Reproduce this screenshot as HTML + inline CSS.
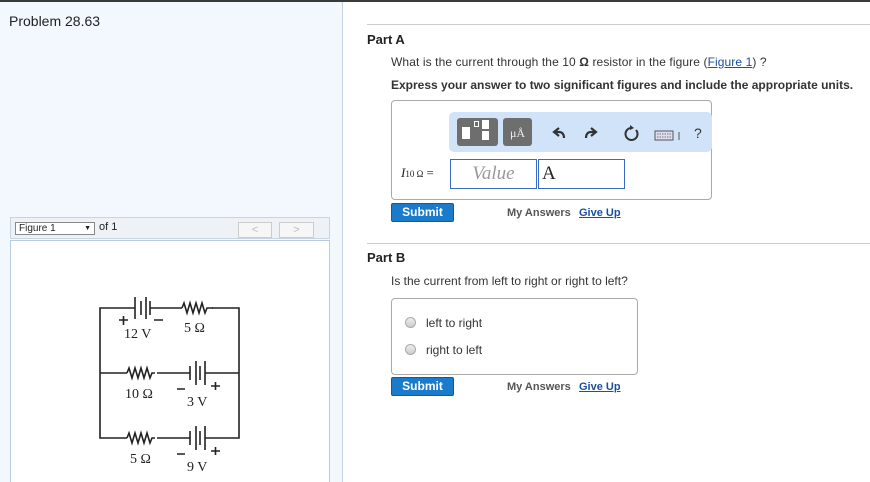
<!DOCTYPE html>
<html><head><meta charset="utf-8"><style>
*{margin:0;padding:0;box-sizing:border-box}
html,body{width:870px;height:482px;overflow:hidden}
body{background:#fff;font-family:"Liberation Sans",Arial,sans-serif;font-size:12px;color:#333;position:relative}
.a{position:absolute;white-space:nowrap}
.btn{position:absolute;background:#1a7bcc;border:1px solid #0e5c9e;border-radius:2px;color:#fff;font-weight:bold;font-size:12px;text-align:center;line-height:17px}
.lnk{font-weight:bold;font-size:11px}
.gu{color:#1a4f9c;text-decoration:underline}
.radio{position:absolute;width:11px;height:11px;border-radius:50%;border:1px solid #aaa;background:linear-gradient(#eee,#ccc)}
</style></head><body>
<div class="a" style="left:0;top:0;width:870px;height:2px;background:#3a3a3a"></div>
<div class="a" style="left:0;top:2px;width:343px;height:480px;background:#f3f8fe;border-right:1px solid #c5d3e0"></div>
<div class="a" style="left:9px;top:13px;font-size:14px;color:#222">Problem 28.63</div>

<div class="a" style="left:10px;top:217px;width:320px;height:22px;background:#eef2f7;border:1px solid #c8d4e0"></div>
<div class="a" style="left:15px;top:222px;width:80px;height:13px;background:#fff;border:1px solid #888;font-size:10px;line-height:11px;padding-left:3px;color:#222">Figure 1<span style="position:absolute;right:3px;font-size:7px">▼</span></div>
<div class="a" style="left:99px;top:221px;font-size:11px;color:#222">of 1</div>
<div class="a" style="left:238px;top:222px;width:34px;height:16px;border:1px solid #ccc;background:#f6f6f6;color:#bbb;text-align:center;font-size:11px;line-height:14px">&lt;</div>
<div class="a" style="left:279px;top:222px;width:35px;height:16px;border:1px solid #ccc;background:#f6f6f6;color:#bbb;text-align:center;font-size:11px;line-height:14px">&gt;</div>
<div class="a" style="left:10px;top:240px;width:320px;height:250px;background:#fff;border:1px solid #b9cde0"></div>
<svg class="a" style="left:0;top:0" width="343" height="482" viewBox="0 0 343 482">
<g stroke="#222" stroke-width="1.6" fill="none">
<path d="M135 308H100V438H127M150 308H182M212 308H239V438H205M127 373H100M205 373H239"/>
<path d="M157 373H190M157 438H190" />
<path d="M182 308l2-5 3 10 3-10 3 10 3-10 3 10 3-10 3 10 2-5h6"/>
<path d="M127 373l2-5 3 10 3-10 3 10 3-10 3 10 3-10 3 10 2-5h3"/>
<path d="M127 438l2-5 3 10 3-10 3 10 3-10 3 10 3-10 3 10 2-5h3"/>
</g>
<g stroke="#222" fill="none">
<path stroke-width="1.6" d="M135 297v22M141 301v14M146 297v22M150 301v14"/>
<path stroke-width="1.6" d="M190 366v14M196 361v24M200 366v14M205 361v24"/>
<path stroke-width="1.6" d="M190 431v14M196 426v24M200 431v14M205 426v24"/>
<path stroke-width="1.6" d="M119 320h9M123.5 316v9M154 320h9M177 389h8M211 386h9M215.5 382v8M177 454h8M211 451h9M215.5 447v8"/>
</g>
<g font-family="Liberation Serif,serif" font-size="14" fill="#222">
<text x="124" y="338">12 V</text><text x="184" y="332">5 Ω</text>
<text x="125" y="398">10 Ω</text><text x="187" y="406">3 V</text>
<text x="130" y="463">5 Ω</text><text x="187" y="471">9 V</text>
</g>
</svg>

<div class="a" style="left:367px;top:24px;width:503px;height:1px;background:#ccc"></div>
<div class="a" style="left:367px;top:32px;font-size:13px;font-weight:bold;color:#222">Part A</div>
<div class="a" style="left:391px;top:55px;font-size:12px;letter-spacing:0.1px">What is the current through the 10 <b>Ω</b> resistor in the figure (<span class="gu">Figure 1</span>) ?</div>
<div class="a" style="left:391px;top:78px;font-size:12px;font-weight:bold">Express your answer to two significant figures and include the appropriate units.</div>
<div class="a" style="left:391px;top:100px;width:321px;height:100px;border:1px solid #aaa;border-radius:4px"></div>
<div class="a" style="left:449px;top:112px;width:263px;height:40px;background:#d0e3f9;border-radius:5px"></div>
<div class="a" style="left:457px;top:118px;width:41px;height:28px;background:#6e6e6e;border-radius:3px"></div>
<div class="a" style="left:462px;top:127px;width:8px;height:12px;background:#fff"></div>
<div class="a" style="left:474px;top:121px;width:5px;height:6px;border:1px solid #fff"></div>
<div class="a" style="left:482px;top:120px;width:7px;height:9px;background:#fff"></div>
<div class="a" style="left:482px;top:131px;width:7px;height:9px;background:#fff"></div>
<div class="a" style="left:503px;top:118px;width:29px;height:28px;background:#6e6e6e;border-radius:3px;color:#eee;font-family:'Liberation Serif',serif;font-size:12px;text-align:center;line-height:30px">μÅ</div>
<svg class="a" style="left:550px;top:122px" width="160" height="22">
<path d="M9 6l-5 4 5 4M4 10h5c3 0 5 2 5 6" stroke="#333" stroke-width="2.2" fill="none"/>
<path d="M41 6l5 4-5 4M46 10h-5c-3 0-5 2-5 6" stroke="#333" stroke-width="2.2" fill="none"/>
<path d="M82 6a6 6 0 1 0 4 2" stroke="#333" stroke-width="2" fill="none"/><path d="M80 3l4 3-4 2z" fill="#333"/>
<rect x="105" y="9" width="18" height="9" fill="#dde" stroke="#555"/>
<path d="M107 12h14M107 15h14" stroke="#777" stroke-dasharray="1.5 1"/>
<path d="M129 10v8" stroke="#555"/>
</svg>
<div class="a" style="left:694px;top:125px;font-size:14px">?</div>
<div class="a" style="left:401px;top:165px;font-family:'Liberation Serif',serif;font-size:13px;color:#222"><i>I</i><span style="font-size:9px">10 Ω</span> =</div>
<div class="a" style="left:450px;top:159px;width:87px;height:30px;border:1px solid #3b6bc8;font-family:'Liberation Serif',serif;font-style:italic;font-size:19px;color:#999;text-align:center;line-height:28px">Value</div>
<div class="a" style="left:538px;top:159px;width:87px;height:30px;border:1px solid #3b6bc8;font-family:'Liberation Serif',serif;font-size:19px;color:#222;padding-left:3px;line-height:28px">A</div>
<div class="btn" style="left:391px;top:203px;width:63px;height:19px">Submit</div>
<div class="a lnk" style="left:507px;top:207px;color:#555">My Answers</div>
<div class="a lnk gu" style="left:579px;top:207px">Give Up</div>

<div class="a" style="left:367px;top:243px;width:503px;height:1px;background:#ccc"></div>
<div class="a" style="left:367px;top:250px;font-size:13px;font-weight:bold;color:#222">Part B</div>
<div class="a" style="left:391px;top:274px;font-size:12px">Is the current from left to right or right to left?</div>
<div class="a" style="left:391px;top:298px;width:247px;height:77px;border:1px solid #aaa;border-radius:4px"></div>
<div class="radio" style="left:405px;top:317px"></div>
<div class="a" style="left:426px;top:316px;font-size:12px">left to right</div>
<div class="radio" style="left:405px;top:344px"></div>
<div class="a" style="left:426px;top:343px;font-size:12px">right to left</div>
<div class="btn" style="left:391px;top:377px;width:63px;height:19px">Submit</div>
<div class="a lnk" style="left:507px;top:381px;color:#555">My Answers</div>
<div class="a lnk gu" style="left:579px;top:381px">Give Up</div>
</body></html>
